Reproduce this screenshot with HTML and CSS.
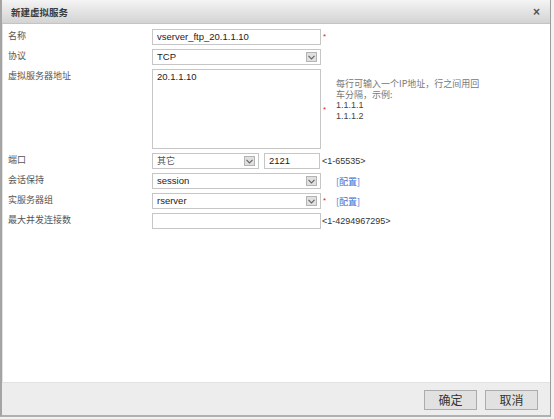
FILE: index.html
```html
<!DOCTYPE html>
<html lang="zh-CN">
<head>
<meta charset="utf-8">
<title>新建虚拟服务</title>
<link rel="stylesheet" href="styles.css">
</head>
<body>
<div class="dialog">
  <div class="titlebar">
    <span class="title">新建虚拟服务</span>
    <span class="close">×</span>
  </div>
  <div class="content">
    <div class="row">
      <div class="label">名称</div>
      <div class="ctrl input wide">vserver_ftp_20.1.1.10</div>
      <div class="after"><span class="req">*</span></div>
    </div>
    <div class="row">
      <div class="label">协议</div>
      <div class="ctrl select wide"><span class="val">TCP</span><span class="arrow"><svg width="7" height="5" viewBox="0 0 7 5"><polyline points="0.5,0.8 3.5,3.8 6.5,0.8" fill="none" stroke="#666" stroke-width="1.2"/></svg></span></div>
    </div>
    <div class="row">
      <div class="label">虚拟服务器地址</div>
      <div class="ctrl textarea wide">20.1.1.10</div>
      <div class="after tall"><span class="req">*</span>
        <div class="hint">
          <div class="cn">每行可输入一个IP地址，行之间用回车分隔，示例:</div>
          <div class="num">1.1.1.1</div>
          <div class="num">1.1.1.2</div>
        </div>
      </div>
    </div>
    <div class="row">
      <div class="label">端口</div>
      <div class="pair">
        <div class="ctrl select short"><span class="val cnval">其它</span><span class="arrow"><svg width="7" height="5" viewBox="0 0 7 5"><polyline points="0.5,0.8 3.5,3.8 6.5,0.8" fill="none" stroke="#666" stroke-width="1.2"/></svg></span></div>
        <div class="ctrl input port">2121</div>
      </div>
      <div class="after"><span class="suffix">&lt;1-65535&gt;</span></div>
    </div>
    <div class="row">
      <div class="label">会话保持</div>
      <div class="ctrl select wide"><span class="val">session</span><span class="arrow"><svg width="7" height="5" viewBox="0 0 7 5"><polyline points="0.5,0.8 3.5,3.8 6.5,0.8" fill="none" stroke="#666" stroke-width="1.2"/></svg></span></div>
      <div class="after"><span class="req"></span><a class="link">[配置]</a></div>
    </div>
    <div class="row">
      <div class="label">实服务器组</div>
      <div class="ctrl select wide"><span class="val">rserver</span><span class="arrow"><svg width="7" height="5" viewBox="0 0 7 5"><polyline points="0.5,0.8 3.5,3.8 6.5,0.8" fill="none" stroke="#666" stroke-width="1.2"/></svg></span></div>
      <div class="after"><span class="req">*</span><a class="link">[配置]</a></div>
    </div>
    <div class="row">
      <div class="label">最大并发连接数</div>
      <div class="ctrl input wide"></div>
      <div class="after"><span class="suffix">&lt;1-4294967295&gt;</span></div>
    </div>
  </div>
  <div class="footer">
    <button class="btn">确定</button>
    <button class="btn">取消</button>
  </div>
</div>
</body>
</html>
```

FILE: styles.css
```css
html, body {
  margin: 0;
  padding: 0;
  background: #f2f2f2;
}
body {
  width: 554px;
  height: 419px;
  overflow: hidden;
  font-family: "Liberation Sans", "Noto Sans CJK SC", sans-serif;
  font-size: 9px;
  color: #333;
}
.dialog {
  width: 551px;
  height: 417px;
  box-sizing: border-box;
  border-left: 2px solid #a4a4a4;
  border-right: 1px solid #9c9c9c;
  border-bottom: 2px solid #b0b0b0;
  display: flex;
  flex-direction: column;
  background: #fff;
}
.titlebar {
  height: 24px;
  flex: none;
  box-sizing: border-box;
  border-bottom: 1px solid #c4c4c4;
  background: linear-gradient(#f4f4f4, #d3d3d3);
  display: flex;
  align-items: center;
  justify-content: space-between;
  padding: 0 10px 0 9px;
}
.title {
  font-family: "Noto Sans CJK SC", sans-serif;
  font-size: 9.5px;
  font-weight: bold;
  color: #3a3a3a;
}
.close {
  font-size: 12px;
  font-weight: bold;
  color: #555;
  line-height: 12px;
}
.content {
  flex: 1;
  padding-top: 5px;
  border-left: 1px solid #e2e2e2;
}
.row {
  display: flex;
  align-items: flex-start;
  margin-bottom: 4px;
}
.label {
  width: 144px;
  padding-left: 5px;
  padding-top: 1px;
  flex: none;
  font-family: "Noto Sans CJK SC", sans-serif;
  font-size: 9px;
  line-height: 12px;
  color: #555;
}
.ctrl {
  box-sizing: border-box;
  height: 16px;
  border: 1px solid #c6c6c6;
  background: #fff;
  color: #222;
  font-size: 9.5px;
  line-height: 14px;
  padding-left: 4px;
  flex: none;
}
.wide { width: 169px; }
.select {
  display: flex;
  align-items: center;
  padding-right: 3px;
}
.select .val { flex: 1; }
.cnval {
  font-family: "Noto Sans CJK SC", sans-serif;
  font-size: 9px;
  color: #555;
}
.arrow {
  width: 11px;
  height: 10px;
  box-sizing: border-box;
  border: 1px solid #b4b4b4;
  background: #e0e0e0;
  display: flex;
  align-items: center;
  justify-content: center;
}
.textarea {
  height: 80px;
  padding-top: 1px;
  line-height: 12px;
}
.pair {
  display: flex;
  gap: 5px;
  width: 169px;
  flex: none;
}
.short { width: 107px; }
.port { width: 56px; }
.after {
  display: flex;
  align-items: center;
  height: 16px;
}
.after.tall {
  height: 80px;
  align-items: flex-start;
}
.req {
  width: 15px;
  padding-left: 2px;
  box-sizing: border-box;
  color: #e02020;
  font-size: 8px;
  line-height: 16px;
  flex: none;
}
.tall .req {
  margin-top: 33px;
}
.suffix {
  margin-left: 1px;
  color: #333;
  font-size: 9px;
}
.link {
  font-family: "Noto Sans CJK SC", sans-serif;
  color: #3b73d6;
  font-size: 9px;
}
.hint {
  margin-top: 9px;
  font-size: 9px;
  line-height: 11px;
}
.hint .cn {
  width: 147px;
  font-family: "Noto Sans CJK SC", sans-serif;
  color: #777;
}
.hint .num {
  height: 11px;
  color: #444;
}
.footer {
  height: 33px;
  flex: none;
  box-sizing: border-box;
  background: #ededed;
  border-top: 1px solid #e2e2e2;
  display: flex;
  justify-content: flex-end;
  align-items: flex-start;
  padding: 7px 12px 0 0;
  gap: 8px;
}
.btn {
  width: 53px;
  height: 20px;
  box-sizing: border-box;
  margin: 0;
  padding: 0;
  border: 1px solid #acacac;
  background: #e1e1e1;
  font-family: "Noto Sans CJK SC", sans-serif;
  font-size: 12px;
  line-height: 18px;
  color: #333;
}
```
